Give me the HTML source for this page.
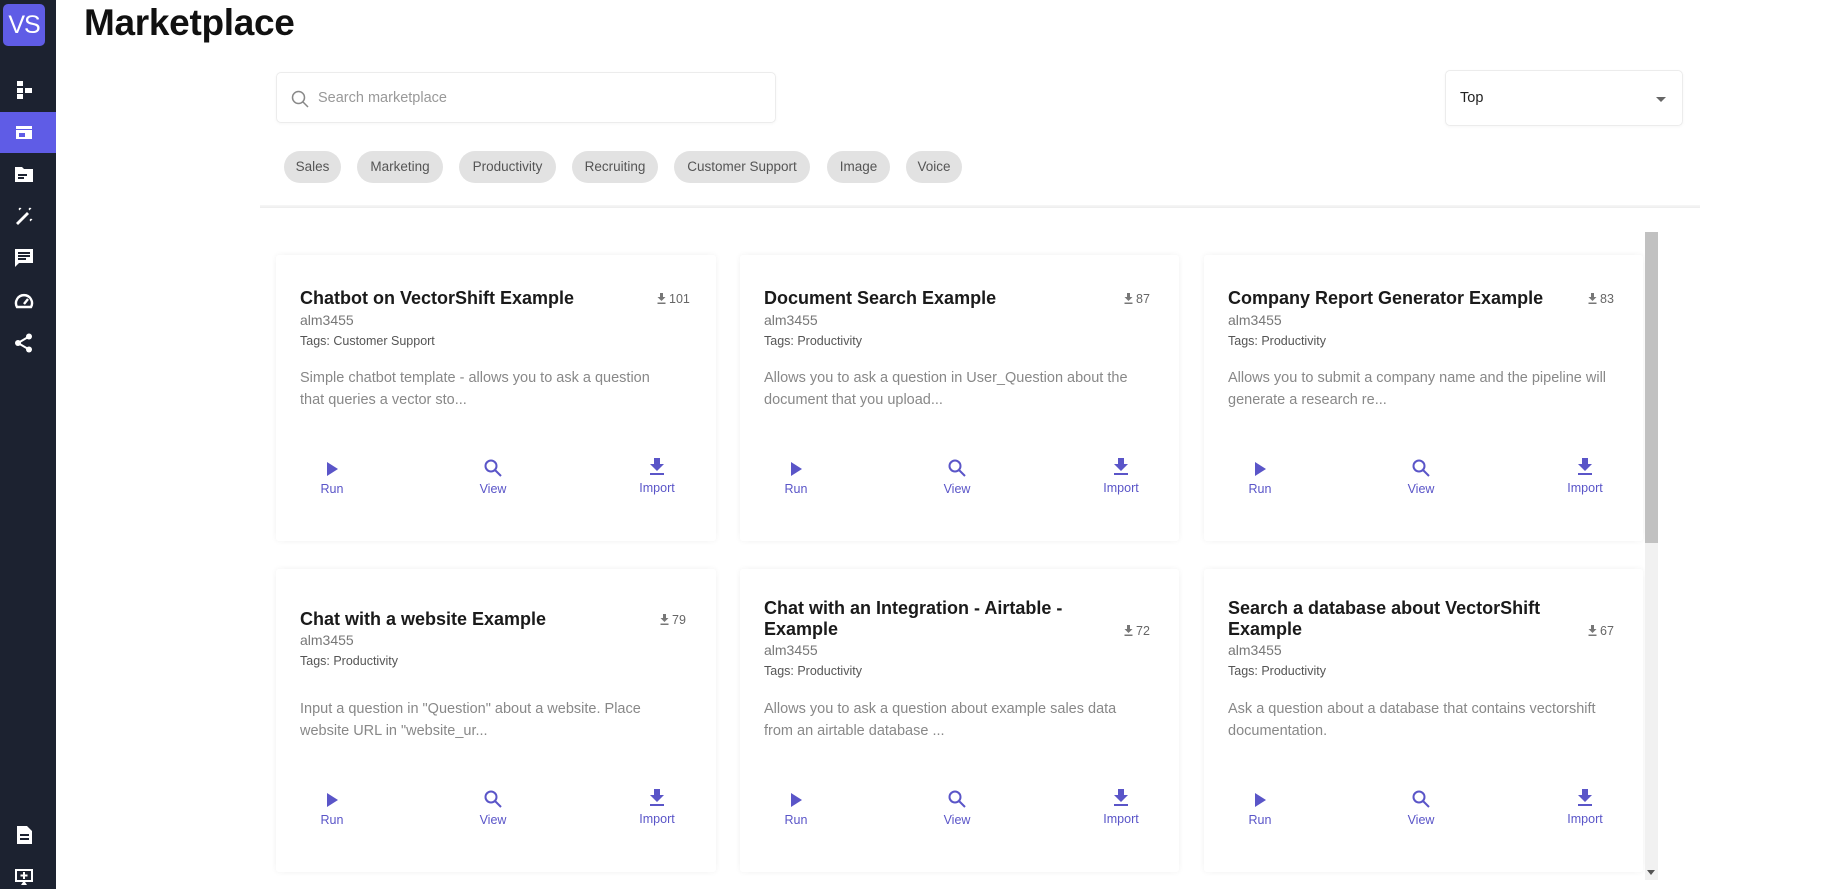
<!DOCTYPE html>
<html><head><meta charset="utf-8"><style>
*{margin:0;padding:0;box-sizing:border-box}
body{width:1823px;height:889px;overflow:hidden;background:#fff;font-family:"Liberation Sans",sans-serif;position:relative}
.sb{position:absolute;left:0;top:0;width:56px;height:889px;background:#1c2230}
.logo{position:absolute;left:3px;top:4px;width:42px;height:42px;background:#5f5ce6;border-radius:5px;color:#fff;font-size:25px;text-align:center;line-height:42px;letter-spacing:-1px}
.act{position:absolute;left:0;top:112px;width:56px;height:41px;background:#5f5ce6}
.ic{position:absolute;left:14px;width:20px;height:20px}
h1{position:absolute;left:84px;top:2px;font-size:37px;font-weight:700;color:#111;letter-spacing:-0.3px}
.search{position:absolute;left:276px;top:72px;width:500px;height:51px;border:1px solid #ececec;border-radius:5px;box-shadow:0 1px 3px rgba(0,0,0,.04)}
.search span{position:absolute;left:41px;top:17px;font-size:14.5px;color:#999}
.sel{position:absolute;left:1445px;top:70px;width:238px;height:56px;border:1px solid #ececec;border-radius:5px;box-shadow:0 1px 3px rgba(0,0,0,.04)}
.sel span{position:absolute;left:14px;top:19px;font-size:14.5px;color:#222}
.sel i{position:absolute;right:16px;top:26px;border-left:5px solid transparent;border-right:5px solid transparent;border-top:5px solid #666}
.chip{position:absolute;top:151px;height:32px;border-radius:16px;background:#e2e2e2;color:#555;font-size:13.5px;line-height:32px;text-align:center}
.div{position:absolute;left:260px;top:205px;width:1440px;height:3px;background:linear-gradient(#f7f7f7,#ececec)}
.card{position:absolute;background:#fff;box-shadow:0 0 6px rgba(0,0,0,.06);border-radius:3px}
.t{position:absolute;left:24px;font-size:18px;font-weight:700;color:#1a1a1a;line-height:21px;width:340px}
.a{position:absolute;left:24px;font-size:14px;color:#777}
.g{position:absolute;left:24px;font-size:12.5px;color:#555}
.d{position:absolute;left:24px;font-size:14.5px;color:#888;line-height:22px;width:400px}
.n{position:absolute;left:381px;font-size:12.5px;color:#666}
.n svg{vertical-align:-1px;margin-right:3px}
.act2{position:absolute;width:60px;text-align:center;color:#5a55c8;font-size:12.5px}
.act2 svg{display:block;margin:0 auto 5px}
.scr{position:absolute;left:1645px;top:232px;width:13px;height:648px;background:#f1f1f1}
.thumb{position:absolute;left:1645px;top:232px;width:13px;height:311px;background:#c1c1c1}
</style></head><body>
<div class="sb">
<div class="logo">VS</div>
<div class="act"></div>
<svg class="ic" style="top:80px" viewBox="0 0 20 20" fill="#fff"><rect x="3" y="1" width="6" height="5"/><rect x="3" y="8" width="6" height="5"/><rect x="3" y="14" width="6" height="5"/><rect x="11" y="8" width="7" height="5"/></svg>
<svg class="ic" style="top:123px" viewBox="0 0 20 20" fill="#fff"><rect x="2" y="3" width="16" height="3"/><path d="M2 7h16v9H2z M5 10v4h6v-4z" fill-rule="evenodd"/></svg>
<svg class="ic" style="top:164px" viewBox="0 0 20 20" fill="#fff"><path d="M1 3h7l2 2h9v13H1z M4 10h9v2H4z M4 13h6v2H4z" fill-rule="evenodd"/></svg>
<svg class="ic" style="top:206px" viewBox="0 0 20 20" fill="#fff"><path d="M2 17L13 6l2 2L4 19z"/><path d="M5 2l1 1M7 2L5 4M15 2l1 1M17 2l-2 2M16 13l1 1M18 13l-2 2" stroke="#fff" stroke-width="1.2"/></svg>
<svg class="ic" style="top:248px" viewBox="0 0 20 20" fill="#fff"><path d="M1 1h18v14H5l-4 4z M4 4h12v2H4z M4 7h12v2H4z M4 10h8v2H4z" fill-rule="evenodd"/></svg>
<svg class="ic" style="top:291px" viewBox="0 0 20 20" fill="none" stroke="#fff" stroke-width="2.4"><path d="M3 16a8 8 0 1 1 14 0z"/><path d="M10 13l4-5"/></svg>
<svg class="ic" style="top:333px" viewBox="0 0 20 20" fill="#fff"><circle cx="15" cy="3.5" r="3"/><circle cx="4" cy="10" r="3"/><circle cx="15" cy="16.5" r="3"/><path d="M15 3.5L4 10l11 6.5" stroke="#fff" stroke-width="2" fill="none"/></svg>
<svg class="ic" style="top:825px" viewBox="0 0 20 20" fill="#fff"><path d="M3 1h10l5 5v13H3z M6 9h9v2H6z M6 13h9v2H6z" fill-rule="evenodd"/></svg>
<svg class="ic" style="top:867px" viewBox="0 0 20 20" fill="#fff"><path d="M1 2h18v13H11l2 3H7l2-3H1z M3 4v9h14V4z" fill-rule="evenodd"/><path d="M10 5v7M6.5 8.5h7" stroke="#fff" stroke-width="2"/></svg>
</div>
<h1>Marketplace</h1>
<div class="search"><svg style="position:absolute;left:14px;top:17px" width="18" height="18" viewBox="0 0 18 18" fill="none" stroke="#888" stroke-width="1.5"><circle cx="7.5" cy="7.5" r="6"/><path d="M12 12l5 5"/></svg><span>Search marketplace</span></div>
<div class="sel"><span>Top</span><i></i></div>
<div class="chip" style="left:284px;width:57px">Sales</div>
<div class="chip" style="left:357px;width:86px">Marketing</div>
<div class="chip" style="left:459px;width:97px">Productivity</div>
<div class="chip" style="left:572px;width:86px">Recruiting</div>
<div class="chip" style="left:674px;width:136px">Customer Support</div>
<div class="chip" style="left:827px;width:63px">Image</div>
<div class="chip" style="left:906px;width:56px">Voice</div>
<div class="div"></div>

<div class="card" style="left:276px;top:255px;width:440px;height:286px">
<div class="t" style="top:33px">Chatbot on VectorShift Example</div><div class="n" style="top:37px"><i class="dl"></i>101</div>
<div class="a" style="top:57px">alm3455</div><div class="g" style="top:79px">Tags: Customer Support</div>
<div class="d" style="top:112px">Simple chatbot template - allows you to ask a question<br>that queries a vector sto...</div>
</div>
<div class="card" style="left:740px;top:255px;width:439px;height:286px">
<div class="t" style="top:33px">Document Search Example</div><div class="n" style="top:37px;left:384px"><i class="dl"></i>87</div>
<div class="a" style="top:57px">alm3455</div><div class="g" style="top:79px">Tags: Productivity</div>
<div class="d" style="top:112px">Allows you to ask a question in User_Question about the<br>document that you upload...</div>
</div>
<div class="card" style="left:1204px;top:255px;width:439px;height:286px">
<div class="t" style="top:33px">Company Report Generator Example</div><div class="n" style="top:37px;left:384px"><i class="dl"></i>83</div>
<div class="a" style="top:57px">alm3455</div><div class="g" style="top:79px">Tags: Productivity</div>
<div class="d" style="top:112px">Allows you to submit a company name and the pipeline will<br>generate a research re...</div>
</div>
<div class="card" style="left:276px;top:569px;width:440px;height:303px">
<div class="t" style="top:40px">Chat with a website Example</div><div class="n" style="top:44px;left:384px"><i class="dl"></i>79</div>
<div class="a" style="top:63px">alm3455</div><div class="g" style="top:85px">Tags: Productivity</div>
<div class="d" style="top:129px">Input a question in "Question" about a website. Place<br>website URL in "website_ur...</div>
</div>
<div class="card" style="left:740px;top:569px;width:439px;height:303px">
<div class="t" style="top:29px">Chat with an Integration - Airtable -<br>Example</div><div class="n" style="top:55px;left:384px"><i class="dl"></i>72</div>
<div class="a" style="top:73px">alm3455</div><div class="g" style="top:95px">Tags: Productivity</div>
<div class="d" style="top:129px">Allows you to ask a question about example sales data<br>from an airtable database ...</div>
</div>
<div class="card" style="left:1204px;top:569px;width:439px;height:303px">
<div class="t" style="top:29px">Search a database about VectorShift<br>Example</div><div class="n" style="top:55px;left:384px"><i class="dl"></i>67</div>
<div class="a" style="top:73px">alm3455</div><div class="g" style="top:95px">Tags: Productivity</div>
<div class="d" style="top:129px">Ask a question about a database that contains vectorshift<br>documentation.</div>
</div>

<div id="acts"></div>
<div class="scr"></div><div class="thumb"></div>
<div style="position:absolute;left:1647px;top:870px;border-left:4px solid transparent;border-right:4px solid transparent;border-top:5px solid #555"></div>

<script>
var dl='<svg width="9" height="11" viewBox="0 0 9 11"><path d="M3 0h3v4h2.5L4.5 8 0.5 4H3z M0.5 9.5h8V11h-8z" fill="#777"/></svg>';
document.querySelectorAll('.dl').forEach(function(e){e.outerHTML=dl;});
var cols=[276,740,1204],rows=[459,790],h='';
var run='<svg width="14" height="16" viewBox="0 0 14 16"><path d="M2 1l11 7-11 7z" fill="#5a55c8"/></svg>';
var view='<svg width="18" height="18" viewBox="0 0 18 18" fill="none" stroke="#5a55c8" stroke-width="2"><circle cx="7" cy="7" r="5.5"/><path d="M11 11l6 6"/></svg>';
var imp='<svg width="16" height="18" viewBox="0 0 16 18"><path d="M5 0h6v6h4l-7 7-7-7h4z M1 15h14v2H1z" fill="#5a55c8"/></svg>';
rows.forEach(function(y){cols.forEach(function(x){
h+='<div class="act2" style="left:'+(x+26)+'px;top:'+(y+2)+'px">'+run+'Run</div>';
h+='<div class="act2" style="left:'+(x+187)+'px;top:'+y+'px">'+view+'View</div>';
h+='<div class="act2" style="left:'+(x+351)+'px;top:'+(y-1)+'px">'+imp+'Import</div>';
});});
document.getElementById('acts').innerHTML=h;
</script>
</body></html>
